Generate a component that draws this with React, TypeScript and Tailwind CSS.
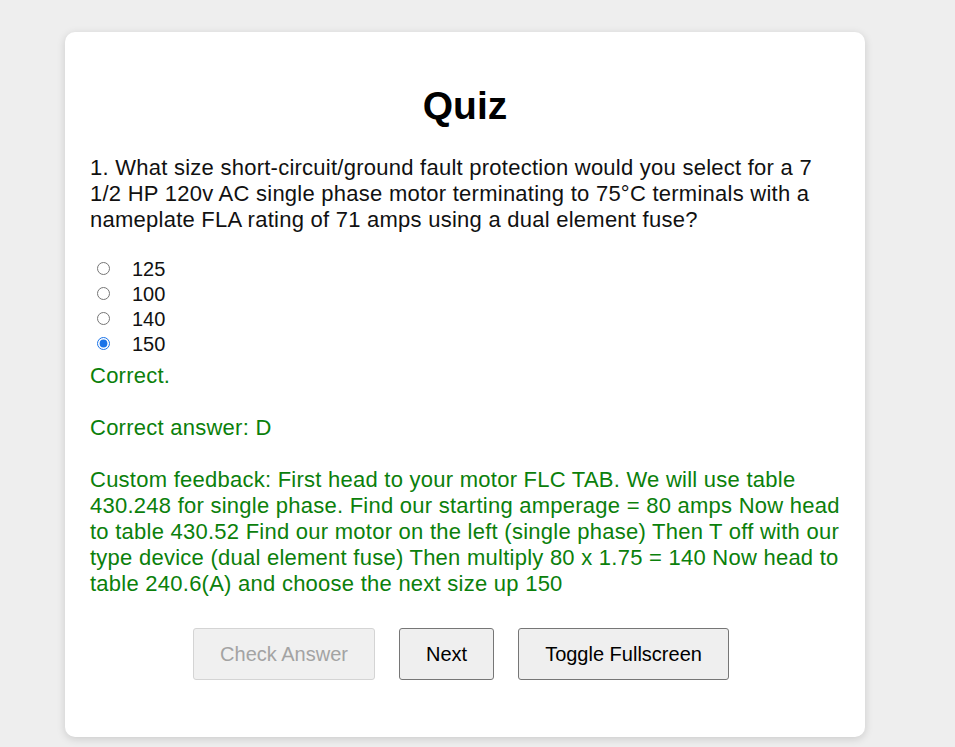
import React from 'react';

const options = ['125', '100', '140', '150'];

export default function App() {
  return (
    <div
      className="min-h-screen bg-[#eeeeee] pt-[32px] pb-[10px]"
      style={{ fontFamily: '"Liberation Sans", Arial, sans-serif' }}
    >
      <div className="ml-[65px] w-[800px] rounded-[10px] bg-white px-[25px] pt-[52px] pb-[57px] shadow-[0_2px_8px_rgba(0,0,0,0.15)]">
        <h1 className="text-center text-[39px] font-bold leading-[44px] text-black">Quiz</h1>

        <p className="mt-[27px] text-[22px] leading-[26px] tracking-[0.25px] text-[#111]">
          1. What size short-circuit/ground fault protection would you select for a 7 1/2 HP 120v AC single
          phase motor terminating to 75°C terminals with a nameplate FLA rating of 71 amps using a dual element
          fuse?
        </p>

        {/* Answer options */}
        <div className="mt-[23px] flex flex-col">
          {options.map((opt, i) => (
            <label key={opt} className="flex h-[25px] items-center text-[20px] text-[#111]">
              <input
                type="radio"
                name="q1"
                checked={i === 3}
                readOnly
                className="ml-[7px] mr-[22px] h-[13px] w-[13px] accent-[#1a73e8]"
              />
              {opt}
            </label>
          ))}
        </div>

        {/* Feedback */}
        <div className="mt-[7px] text-[22px] leading-[26px] tracking-[0.25px] text-[#0b800b]">
          <p>Correct.</p>
          <p className="mt-[26px]">Correct answer: D</p>
          <p className="mt-[26px]">
            Custom feedback: First head to your motor FLC TAB. We will use table 430.248 for single phase. Find
            our starting amperage = 80 amps Now head to table 430.52 Find our motor on the left (single phase)
            Then T off with our type device (dual element fuse) Then multiply 80 x 1.75 = 140 Now head to table
            240.6(A) and choose the next size up 150
          </p>
        </div>

        <div className="mt-[31px] flex justify-center gap-[24px] pr-[8px]">
          <button
            disabled
            className="h-[52px] w-[182px] rounded-[3px] border border-[#d4d4d4] bg-[#f0f0f0] text-[20px] text-[#a3a3a3]"
          >
            Check Answer
          </button>
          <button className="h-[52px] w-[95px] rounded-[3px] border border-[#767676] bg-[#efefef] text-[20px] text-black">
            Next
          </button>
          <button className="h-[52px] w-[211px] rounded-[3px] border border-[#767676] bg-[#efefef] text-[20px] text-black">
            Toggle Fullscreen
          </button>
        </div>
      </div>
    </div>
  );
}
